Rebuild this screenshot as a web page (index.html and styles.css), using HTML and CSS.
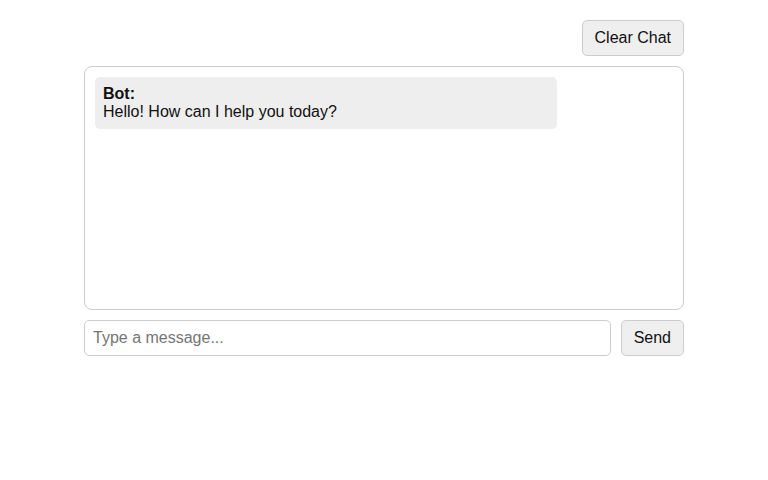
FILE: index.html
```html
<!DOCTYPE html>
<html>
<head>
<meta charset="utf-8">
<link rel="stylesheet" href="styles.css">
</head>
<body>
<div class="container">
  <div class="header">
    <button class="btn">Clear Chat</button>
  </div>
  <div class="chat-box">
    <div class="message bot"><strong>Bot:</strong><br>Hello! How can I help you today?</div>
  </div>
  <div class="input-row">
    <input class="msg-input" type="text" placeholder="Type a message...">
    <button class="btn">Send</button>
  </div>
</div>
</body>
</html>
```
FILE: styles.css
```css
html, body {
  margin: 0;
  padding: 0;
  background: #fff;
  font-family: "Liberation Sans", Arial, sans-serif;
  font-size: 16px;
  color: #111;
}
.container {
  width: 600px;
  margin: 20px auto 0;
}
.header {
  display: flex;
  justify-content: flex-end;
  margin-bottom: 10px;
}
.btn {
  font-family: "Liberation Sans", Arial, sans-serif;
  font-size: 16px;
  line-height: 18px;
  padding: 8px 12px;
  background: #efefef;
  border: 1px solid #ccc;
  border-radius: 5px;
  color: #111;
}
.chat-box {
  box-sizing: border-box;
  height: 244px;
  border: 1px solid #ccc;
  border-radius: 8px;
  padding: 10px;
  overflow-y: auto;
}
.message {
  box-sizing: border-box;
  max-width: 80%;
  padding: 8px;
  border-radius: 5px;
  line-height: 18px;
  background: #eee;
}
.input-row {
  display: flex;
  gap: 10px;
  margin-top: 10px;
}
.msg-input {
  flex: 1;
  font-family: "Liberation Sans", Arial, sans-serif;
  font-size: 16px;
  line-height: 18px;
  padding: 8px;
  border: 1px solid #ccc;
  border-radius: 5px;
  outline: none;
}
.msg-input::placeholder {
  color: #757575;
}
```
